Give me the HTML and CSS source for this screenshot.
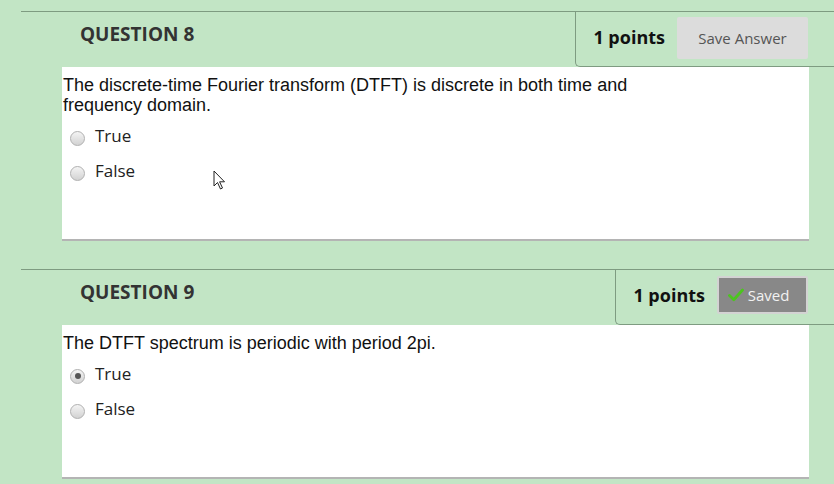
FILE: index.html
```html
<!DOCTYPE html>
<html lang="en">
<head>
    <meta charset="UTF-8">
    <title>Questions</title>
    <link rel="stylesheet" href="styles.css">
</head>
<body>
    <!-- Frage 8 -->
    <div class="question">
        <div class="question-head">
            <h3 class="question-title">QUESTION 8</h3>
            <div class="points-box">
                <span class="points">1 points</span>
                <button class="save-btn">Save Answer</button>
            </div>
        </div>
        <div class="question-body">
            <p class="question-text">The discrete-time Fourier transform (DTFT) is discrete in both time and frequency domain.</p>
            <label class="answer"><input type="radio" name="q8"> <span>True</span></label>
            <label class="answer"><input type="radio" name="q8"> <span>False</span></label>
        </div>
    </div>

    <!-- Frage 9 -->
    <div class="question">
        <div class="question-head">
            <h3 class="question-title">QUESTION 9</h3>
            <div class="points-box">
                <span class="points">1 points</span>
                <button class="save-btn saved">
                    <svg class="check" width="16" height="14" viewBox="0 0 16 14">
                        <path d="M1.5 7.5 L5.8 11.8 L14.5 2" fill="none" stroke="#4cc41f" stroke-width="2.8" stroke-linecap="round" stroke-linejoin="round"/>
                    </svg>
                    Saved
                </button>
            </div>
        </div>
        <div class="question-body">
            <p class="question-text">The DTFT spectrum is periodic with period 2pi.</p>
            <label class="answer"><input type="radio" name="q9" checked> <span>True</span></label>
            <label class="answer"><input type="radio" name="q9"> <span>False</span></label>
        </div>
    </div>

    <!-- Mauszeiger -->
    <svg class="cursor" width="14" height="20" viewBox="0 0 14 20">
        <path d="M1 1 L1 16 L4.5 12.5 L7.5 19 L9.5 18 L6.6 11.8 L11.5 11.8 Z" fill="#fff" stroke="#222" stroke-width="1"/>
    </svg>
</body>
</html>
```

FILE: styles.css
```css
body {
    margin: 0;
    padding: 11px 0 0 21px;
    background: #c2e5c5;
    font-family: 'Open Sans', sans-serif;
    color: #222;
    height: 484px;
    overflow: hidden;
    box-sizing: border-box;
}

/* Frage Container */
.question {
    border-top: 1px solid #7e9b81;
    margin-bottom: 28px;
}

.question-head {
    display: flex;
    justify-content: space-between;
    align-items: flex-start;
    height: 55px;
}

.question-title {
    margin: 0;
    padding: 8px 0 0 59px;
    font-size: 19px;
    font-weight: 700;
    color: #333;
    line-height: 28px;
}

/* Punkte + Button */
.points-box {
    display: flex;
    align-items: center;
    height: 54px;
    padding: 0 26px 0 17px;
    border-left: 1px solid #7e9b81;
    border-bottom: 1px solid #7e9b81;
    border-bottom-left-radius: 5px;
}

.points {
    font-size: 18px;
    font-weight: 700;
    color: #111;
    margin: 0 12px 4px 0;
}

.save-btn {
    font-family: 'Open Sans', sans-serif;
    font-size: 15px;
    color: #555;
    background: #dcdcdc;
    border: none;
    border-radius: 2px;
    width: 131px;
    height: 42px;
    margin-top: -2px;
    cursor: pointer;
}

.save-btn.saved {
    width: 91px;
    height: 38px;
    color: #f2f2f2;
    background: #888;
    border: 2px solid #d3d3d3;
    display: flex;
    align-items: center;
    justify-content: center;
    gap: 4px;
    padding: 0 8px 0 0;
    margin-top: -4px;
}

.check {
    display: block;
}

/* Weisse Antwort Box */
.question-body {
    background: #fff;
    margin: 0 25px 0 41px;
    padding: 8px 0 51px 1px;
    border-bottom: 2px solid #b4b4b4;
}

.question-text {
    margin: 0 0 3px;
    width: 600px;
    font-family: 'Liberation Sans', Arial, sans-serif;
    font-size: 18px;
    line-height: 20px;
    color: #111;
}

.answer {
    display: flex;
    align-items: center;
    height: 35px;
    font-size: 17px;
    color: #222;
}

.answer input {
    appearance: none;
    width: 15px;
    height: 15px;
    margin: 5px 10px 0 7px;
    border: 1px solid #b0b0b0;
    border-radius: 50%;
    background: linear-gradient(#f4f4f4, #d2d2d2);
    box-sizing: border-box;
    position: relative;
}

.answer input:checked::after {
    content: '';
    position: absolute;
    left: 3.5px;
    top: 3.5px;
    width: 6px;
    height: 6px;
    border-radius: 50%;
    background: #555;
}

.cursor {
    position: absolute;
    left: 213px;
    top: 170px;
}
```
